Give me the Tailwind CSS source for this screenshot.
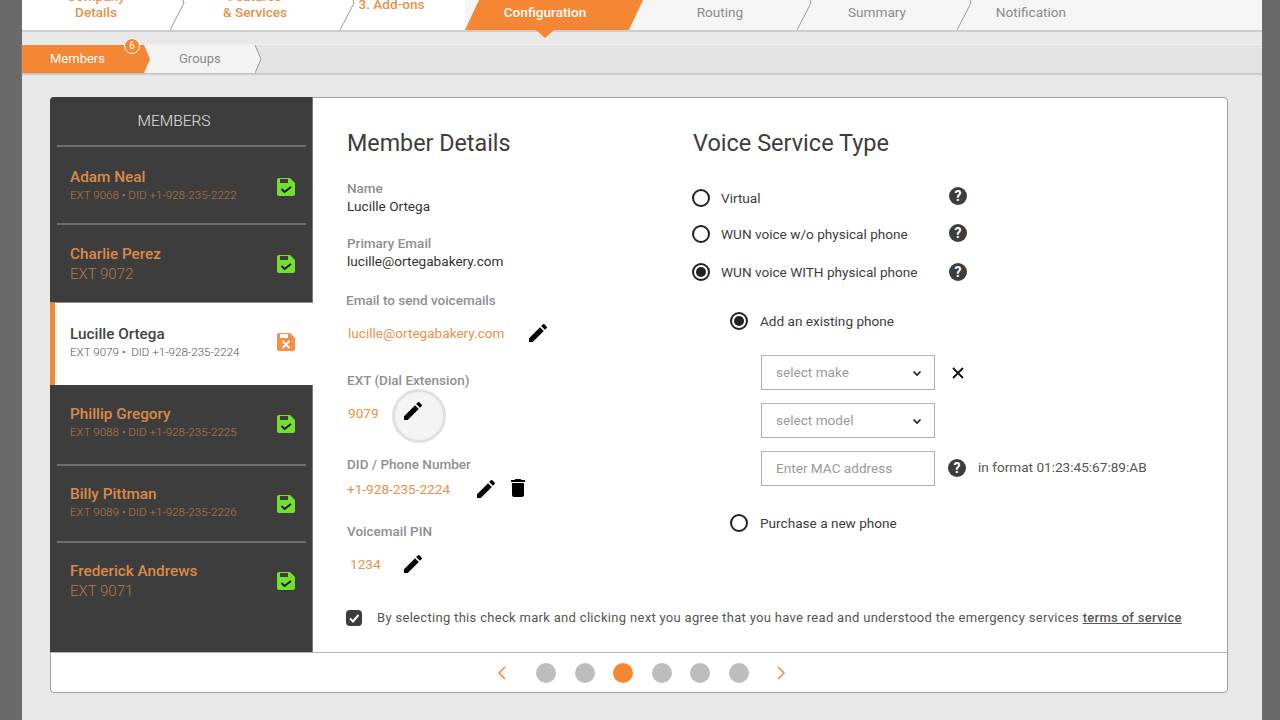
<!DOCTYPE html>
<html lang="en">
    <head>
        <meta charset="UTF-8">
        <script src="https://cdn.jsdelivr.net/npm/@tailwindcss/browser@4"></script>
        <title>Configuration</title>
    </head>
    <body class="h-[720px] overflow-hidden bg-[#e8e8e8] font-[Roboto,sans-serif]">
        <div class="flex h-[720px]">
            <div class="w-[22px] shrink-0 bg-[#6a6a6a]"></div>

            <main class="w-[1240px] shrink-0">
                <!-- wizard steps -->
                <div class="relative h-[32px] border-b-2 border-[#cdcdcd]">
                    <div class="flex h-[30px] overflow-hidden bg-[#f5f5f5] text-[13.6px] font-normal">
                        <div class="relative flex w-[148px] shrink-0 items-center justify-center bg-white pb-[23px] text-center font-medium leading-[16px] text-[#e8924a]">
                            <span>Company<br>Details</span>
                            <svg class="absolute left-full top-0 z-10" width="16" height="30" fill="none" stroke="#9a9a9a"><path d="M0 30L14 3l-1-3"/></svg>
                        </div>
                        <div class="relative flex w-[170px] shrink-0 items-center justify-center bg-white pb-[23px] text-center font-medium leading-[16px] text-[#e8924a]">
                            <span>Features<br>&amp; Services</span>
                            <svg class="absolute left-full top-0 z-10" width="16" height="30" fill="none" stroke="#9a9a9a"><path d="M0 30L14 3l-1-3"/></svg>
                        </div>
                        <div class="flex w-[125px] shrink-0 items-center justify-center bg-white pb-[22px] pr-[22px] font-medium text-[#e8924a]">3. Add-ons</div>
                        <div class="flex w-[178px] shrink-0 items-center justify-center bg-[#f58634] pr-[18px] pb-[5px] font-medium text-white [clip-path:polygon(14px_0,100%_0,164px_100%,0_100%)]">Configuration</div>
                        <div class="relative flex w-[154px] shrink-0 items-center justify-center pb-[5px] text-[#8a8a8a]">
                            Routing
                            <svg class="absolute left-full top-0 z-10" width="16" height="30" fill="none" stroke="#9a9a9a"><path d="M0 30L14 3l-1-3"/></svg>
                        </div>
                        <div class="relative flex w-[160px] shrink-0 items-center justify-center pb-[5px] text-[#8a8a8a]">
                            Summary
                            <svg class="absolute left-full top-0 z-10" width="16" height="30" fill="none" stroke="#9a9a9a"><path d="M0 30L14 3l-1-3"/></svg>
                        </div>
                        <div class="flex w-[148px] shrink-0 items-center justify-center pb-[5px] text-[#8a8a8a]">Notification</div>
                    </div>
                    <svg class="absolute left-[514px] top-[30px]" width="18" height="8" fill="#f58634"><path d="M0 0h18l-9 8z"/></svg>
                </div>

                <!-- sub tabs -->
                <div class="mt-[12px] flex h-[30px] border-y border-[#f0f0f0] border-b-[#c4c4c4] bg-[#e3e3e3] shadow-[0_1px_1px_#d0d0d0]">
                    <div class="relative flex h-[28px] w-[122px] shrink-0 items-center bg-[#f58634] pl-[28px] text-[13px] text-white">
                        Members
                        <svg class="absolute left-full top-0 z-10" width="6" height="28" fill="#f58634"><path d="M0 0l6 14-6 14z"/></svg>
                        <span class="absolute -top-[7px] left-[102px] z-20 flex h-[16px] w-[16px] items-center justify-center rounded-full border border-white bg-[#f58634] text-[10px] leading-none text-white">6</span>
                    </div>
                    <div class="relative flex h-[28px] w-[111px] shrink-0 items-center bg-[#f3f3f3] pl-[35px] text-[13px] text-[#8a8a8a]">
                        Groups
                        <svg class="absolute left-full top-0" width="7" height="28" fill="#f3f3f3" stroke="#9a9a9a"><path d="M0 0l6 14-6 14"/></svg>
                    </div>
                </div>

                <!-- card -->
                <div class="ml-[28px] mt-[23px] flex h-[596px] w-[1178px] flex-col rounded-sm border border-[#a0a0a0] bg-white">
                    <div class="flex h-[554px] shrink-0">
                        <aside class="-ml-px -mt-px flex w-[263px] shrink-0 flex-col rounded-tl-sm bg-[#3d3d3d] shadow-[inset_-1px_0_0_#7a7a7a]">
                            <div class="flex h-[48px] items-center justify-center pr-[15px] pt-[2px] text-[15.5px] font-light text-[#e2e2e2]">MEMBERS</div>
                            <div class="mx-[7px] h-[2px] bg-[#6e6e6e]"></div>

                            <div class="flex h-[76px] items-center justify-between pl-[20px] pr-[18px]">
                                <div>
                                    <div class="h-[20px] text-[15.3px] font-medium leading-[20px] text-[#dc8a48]">Adam Neal</div>
                                    <div class="h-[16px] text-[11.6px] font-light leading-[16px] text-[#b87a48]">EXT 9068 • DID +1-928-235-2222</div>
                                </div>
                                <svg class="mt-[4px]" width="18" height="18" viewBox="0 0 18 18"><path d="M2 0h11l5 5v11a2 2 0 0 1-2 2H2a2 2 0 0 1-2-2V2a2 2 0 0 1 2-2z" fill="#72e02c"/><rect x="3" y="1" width="8" height="4" fill="#3d3d3d"/><path d="M4.500 11l3 3L14 9" fill="none" stroke="#111" stroke-width="1.800"/></svg>
                            </div>
                            <div class="mx-[7px] h-[2px] bg-[#6e6e6e]"></div>

                            <div class="flex h-[78px] items-center justify-between pl-[20px] pr-[18px]">
                                <div>
                                    <div class="h-[20px] text-[15.3px] font-medium leading-[20px] text-[#dc8a48]">Charlie Perez</div>
                                    <div class="h-[20px] text-[15px] font-light leading-[20px] text-[#b87a48]">EXT 9072</div>
                                </div>
                                <svg width="18" height="18" viewBox="0 0 18 18"><path d="M2 0h11l5 5v11a2 2 0 0 1-2 2H2a2 2 0 0 1-2-2V2a2 2 0 0 1 2-2z" fill="#72e02c"/><rect x="3" y="1" width="8" height="4" fill="#3d3d3d"/><path d="M4.500 11l3 3L14 9" fill="none" stroke="#111" stroke-width="1.800"/></svg>
                            </div>

                            <div class="flex h-[82px] items-center justify-between border-l-[5px] border-[#f58634] bg-white pl-[15px] pr-[18px] pb-[4px] shadow-[0_-1px_0_#8a8a8a]">
                                <div>
                                    <div class="h-[20px] text-[15.3px] font-medium leading-[20px] text-[#444]">Lucille Ortega</div>
                                    <div class="h-[16px] text-[11.6px] font-light leading-[16px] text-[#555]">EXT 9079 •&nbsp; DID +1-928-235-2224</div>
                                </div>
                                <svg width="18" height="18" viewBox="0 0 18 18"><path d="M2 0h11l5 5v11a2 2 0 0 1-2 2H2a2 2 0 0 1-2-2V2a2 2 0 0 1 2-2z" fill="#f58f45"/><rect x="3" y="1" width="8" height="4" fill="#fff"/><path d="M5.500 8l7 7m0-7l-7 7" fill="none" stroke="#fff" stroke-width="1.800"/></svg>
                            </div>

                            <div class="flex h-[79px] items-center justify-between pl-[20px] pr-[18px]">
                                <div class="pb-[5px]">
                                    <div class="h-[20px] text-[15.3px] font-medium leading-[20px] text-[#dc8a48]">Phillip Gregory</div>
                                    <div class="h-[16px] text-[11.6px] font-light leading-[16px] text-[#b87a48]">EXT 9088 • DID +1-928-235-2225</div>
                                </div>
                                <svg class="-mt-px" width="18" height="18" viewBox="0 0 18 18"><path d="M2 0h11l5 5v11a2 2 0 0 1-2 2H2a2 2 0 0 1-2-2V2a2 2 0 0 1 2-2z" fill="#72e02c"/><rect x="3" y="1" width="8" height="4" fill="#3d3d3d"/><path d="M4.500 11l3 3L14 9" fill="none" stroke="#111" stroke-width="1.800"/></svg>
                            </div>
                            <div class="mx-[7px] h-[2px] bg-[#6e6e6e]"></div>

                            <div class="flex h-[75px] items-center justify-between pl-[20px] pr-[18px]">
                                <div class="pb-[4px]">
                                    <div class="h-[20px] text-[15.3px] font-medium leading-[20px] text-[#dc8a48]">Billy Pittman</div>
                                    <div class="h-[16px] text-[11.6px] font-light leading-[16px] text-[#b87a48]">EXT 9089 • DID +1-928-235-2226</div>
                                </div>
                                <svg width="18" height="18" viewBox="0 0 18 18"><path d="M2 0h11l5 5v11a2 2 0 0 1-2 2H2a2 2 0 0 1-2-2V2a2 2 0 0 1 2-2z" fill="#72e02c"/><rect x="3" y="1" width="8" height="4" fill="#3d3d3d"/><path d="M4.500 11l3 3L14 9" fill="none" stroke="#111" stroke-width="1.800"/></svg>
                            </div>
                            <div class="mx-[7px] h-[2px] bg-[#6e6e6e]"></div>

                            <div class="flex h-[76px] items-center justify-between pl-[20px] pr-[18px]">
                                <div>
                                    <div class="h-[20px] text-[15.3px] font-medium leading-[20px] text-[#dc8a48]">Frederick Andrews</div>
                                    <div class="h-[20px] text-[15px] font-light leading-[20px] text-[#b87a48]">EXT 9071</div>
                                </div>
                                <svg width="18" height="18" viewBox="0 0 18 18"><path d="M2 0h11l5 5v11a2 2 0 0 1-2 2H2a2 2 0 0 1-2-2V2a2 2 0 0 1 2-2z" fill="#72e02c"/><rect x="3" y="1" width="8" height="4" fill="#3d3d3d"/><path d="M4.500 11l3 3L14 9" fill="none" stroke="#111" stroke-width="1.800"/></svg>
                            </div>
                        </aside>

                        <div class="flex-1 pl-[34px] pt-[29px]">
                            <div class="flex">
                                <!-- member details -->
                                <section class="w-[346px] shrink-0 text-[13.6px]">
                                    <h2 class="h-[32px] text-[23.3px] font-normal leading-[32px] text-[#3d3d3d]">Member Details</h2>

                                    <div class="mt-[20px] h-[18px] text-[13.5px] font-medium leading-[18px] text-[#8f8f8f]">Name</div>
                                    <div class="h-[18px] leading-[18px] text-[#333]">Lucille Ortega</div>

                                    <div class="mt-[19px] h-[18px] text-[13.5px] font-medium leading-[18px] text-[#8f8f8f]">Primary Email</div>
                                    <div class="h-[18px] leading-[18px] text-[#333]">lucille@ortegabakery.com</div>

                                    <div class="-ml-px mt-[21px] h-[18px] text-[13.5px] font-medium leading-[18px] text-[#8f8f8f]">Email to send voicemails</div>
                                    <div class="mt-[9px] flex h-[30px] items-center gap-[22px] pl-px text-[#e8924a]">
                                        lucille@ortegabakery.com
                                        <svg width="24" height="24" viewBox="0 0 24 24"><path d="M3 17.250V21h3.750L17.810 9.940l-3.750-3.750L3 17.250zM20.710 7.040a1 1 0 0 0 0-1.410l-2.340-2.340a1 1 0 0 0-1.410 0l-1.830 1.830 3.750 3.750 1.830-1.830z"/></svg>
                                    </div>

                                    <div class="mt-[23px] h-[18px] text-[13.5px] font-medium leading-[18px] text-[#8f8f8f]">EXT (Dial Extension)</div>
                                    <div class="mt-[9px] flex h-[30px] items-center gap-[22px] pl-px text-[#e8924a]">
                                        9079
                                        <span class="relative flex h-[24px] w-[24px] items-center justify-center">
                                            <span class="absolute left-[-15px] top-[-12px] ml-[6px] h-[54px] w-[54px] rounded-full border-[3px] border-[#e0e0e0] bg-[#f4f4f4]"></span>
                                            <svg class="relative -mt-[5px]" width="24" height="24" viewBox="0 0 24 24"><path d="M3 17.250V21h3.750L17.810 9.940l-3.750-3.750L3 17.250zM20.710 7.040a1 1 0 0 0 0-1.410l-2.340-2.340a1 1 0 0 0-1.410 0l-1.830 1.830 3.750 3.750 1.830-1.830z"/></svg>
                                        </span>
                                    </div>

                                    <div class="mt-[27px] h-[18px] text-[13.5px] font-medium leading-[18px] text-[#8f8f8f]">DID / Phone Number</div>
                                    <div class="mt-px flex h-[30px] items-center text-[#e8924a]">
                                        <span class="w-[127px]">+1-928-235-2224</span>
                                        <svg width="24" height="24" viewBox="0 0 24 24"><path d="M3 17.250V21h3.750L17.810 9.940l-3.750-3.750L3 17.250zM20.710 7.040a1 1 0 0 0 0-1.410l-2.340-2.340a1 1 0 0 0-1.410 0l-1.830 1.830 3.750 3.750 1.830-1.830z"/></svg>
                                        <svg class="ml-[8px] -mt-[2px]" width="24" height="24" viewBox="0 0 24 24"><path d="M6 19c0 1.100.9 2 2 2h8c1.100 0 2-.9 2-2V7H6v12zM19 4h-3.500l-1-1h-5l-1 1H5v2h14V4z"/></svg>
                                    </div>

                                    <div class="mt-[18px] h-[18px] text-[13.5px] font-medium leading-[18px] text-[#8f8f8f]">Voicemail PIN</div>
                                    <div class="mt-[9px] flex h-[30px] items-center gap-[20px] pl-[3px] text-[#e8924a]">
                                        1234
                                        <svg width="24" height="24" viewBox="0 0 24 24"><path d="M3 17.250V21h3.750L17.810 9.940l-3.750-3.750L3 17.250zM20.710 7.040a1 1 0 0 0 0-1.410l-2.340-2.340a1 1 0 0 0-1.410 0l-1.830 1.830 3.750 3.750 1.830-1.830z"/></svg>
                                    </div>
                                </section>

                                <!-- voice service -->
                                <section class="flex-1 text-[13.6px] text-[#3d3d3d]">
                                    <h2 class="h-[32px] text-[23.5px] font-normal leading-[32px] text-[#3d3d3d]">Voice Service Type</h2>

                                    <div class="mt-[28px] flex h-[22px] w-[275px] items-center">
                                        <span class="-ml-px h-[18px] w-[18px] shrink-0 rounded-full border-2 border-[#222]"></span>
                                        <span class="ml-[11px] flex-1">Virtual</span>
                                        <span class="-mt-[4px] -ml-[2px] mr-px flex h-[18px] w-[18px] items-center justify-center rounded-full bg-[#3d3d3d] text-[14px] font-bold leading-none text-white">?</span>
                                    </div>
                                    <div class="mt-[14px] flex h-[22px] w-[275px] items-center">
                                        <span class="-ml-px h-[18px] w-[18px] shrink-0 rounded-full border-2 border-[#222]"></span>
                                        <span class="ml-[11px] flex-1">WUN voice w/o physical phone</span>
                                        <span class="-mt-[2px] -ml-[2px] mr-px flex h-[18px] w-[18px] items-center justify-center rounded-full bg-[#3d3d3d] text-[14px] font-bold leading-none text-white">?</span>
                                    </div>
                                    <div class="mt-[16px] flex h-[22px] w-[275px] items-center">
                                        <span class="-ml-px flex h-[18px] w-[18px] shrink-0 items-center justify-center rounded-full border-2 border-[#222]"><span class="h-[10px] w-[10px] rounded-full bg-[#222]"></span></span>
                                        <span class="ml-[11px] flex-1">WUN voice WITH physical phone</span>
                                        <span class="-ml-[2px] mr-px flex h-[18px] w-[18px] items-center justify-center rounded-full bg-[#3d3d3d] text-[14px] font-bold leading-none text-white">?</span>
                                    </div>

                                    <div class="ml-[37px] mt-[27px] flex h-[22px] items-center">
                                        <span class="flex h-[18px] w-[18px] shrink-0 items-center justify-center rounded-full border-2 border-[#222]"><span class="h-[10px] w-[10px] rounded-full bg-[#222]"></span></span>
                                        <span class="ml-[12px]">Add an existing phone</span>
                                    </div>

                                    <div class="ml-[68px] mt-[23px] flex items-center">
                                        <div class="flex h-[35px] w-[174px] items-center justify-between border border-[#b0b0b0] pl-[14px] pr-[11px] text-[#9a9a9a]">
                                            select make
                                            <svg width="12" height="12" viewBox="0 0 12 12" fill="none" stroke="#222" stroke-width="1.700"><path d="M2.500 4.500L6 8l3.500-3.500"/></svg>
                                        </div>
                                        <svg class="ml-[16px]" width="14" height="14" viewBox="0 0 14 14" fill="none" stroke="#111" stroke-width="1.800"><path d="M2 2l10 10M12 2L2 12"/></svg>
                                    </div>
                                    <div class="ml-[68px] mt-[13px] flex h-[35px] w-[174px] items-center justify-between border border-[#b0b0b0] pl-[14px] pr-[11px] text-[#9a9a9a]">
                                        select model
                                        <svg width="12" height="12" viewBox="0 0 12 12" fill="none" stroke="#222" stroke-width="1.700"><path d="M2.500 4.500L6 8l3.500-3.500"/></svg>
                                    </div>
                                    <div class="ml-[68px] mt-[13px] flex items-center">
                                        <div class="flex h-[35px] w-[174px] items-center border border-[#b0b0b0] pl-[14px] text-[#9a9a9a]">Enter MAC address</div>
                                        <span class="ml-[13px] -mt-px flex h-[18px] w-[18px] items-center justify-center rounded-full bg-[#3d3d3d] text-[14px] font-bold leading-none text-white">?</span>
                                        <span class="ml-[12px] -mt-[2px] text-[#555]">in format 01:23:45:67:89:AB</span>
                                    </div>

                                    <div class="ml-[37px] mt-[26px] flex h-[22px] items-center">
                                        <span class="h-[18px] w-[18px] shrink-0 rounded-full border-2 border-[#222]"></span>
                                        <span class="ml-[12px]">Purchase a new phone</span>
                                    </div>
                                </section>
                            </div>

                            <div class="mt-[27px] flex h-[24px] items-center text-[13px] tracking-[0.31px] text-[#555]">
                                <span class="-ml-px flex h-[16px] w-[16px] shrink-0 items-center justify-center rounded-sm bg-[#3d3d3d]">
                                    <svg width="12" height="12" viewBox="0 0 12 12" fill="none" stroke="#fff" stroke-width="2"><path d="M2 6.500L5 9.500L10.500 3"/></svg>
                                </span>
                                <span class="ml-[15px] whitespace-nowrap">By selecting this check mark and clicking next you agree that you have read and understood the emergency services <span class="font-medium underline">terms of service</span></span>
                            </div>
                        </div>
                    </div>

                    <!-- pager -->
                    <div class="flex flex-1 items-center justify-center border-t border-[#b0b0b0] pl-[5px]">
                        <svg class="mr-[29px]" width="10" height="14" viewBox="0 0 10 14" fill="none" stroke="#f58634" stroke-width="1.500"><path d="M8 1L2 7l6 6"/></svg>
                        <div class="flex gap-[18.6px]">
                            <span class="h-[20px] w-[20px] rounded-full bg-[#bdbdbd]"></span>
                            <span class="h-[20px] w-[20px] rounded-full bg-[#bdbdbd]"></span>
                            <span class="h-[20px] w-[20px] rounded-full bg-[#f58634]"></span>
                            <span class="h-[20px] w-[20px] rounded-full bg-[#bdbdbd]"></span>
                            <span class="h-[20px] w-[20px] rounded-full bg-[#bdbdbd]"></span>
                            <span class="h-[20px] w-[20px] rounded-full bg-[#bdbdbd]"></span>
                        </div>
                        <svg class="ml-[27px]" width="10" height="14" viewBox="0 0 10 14" fill="none" stroke="#f58634" stroke-width="1.500"><path d="M2 1l6 6-6 6"/></svg>
                    </div>
                </div>
            </main>

            <div class="flex-1 bg-[#6a6a6a]"></div>
        </div>
    </body>
</html>
